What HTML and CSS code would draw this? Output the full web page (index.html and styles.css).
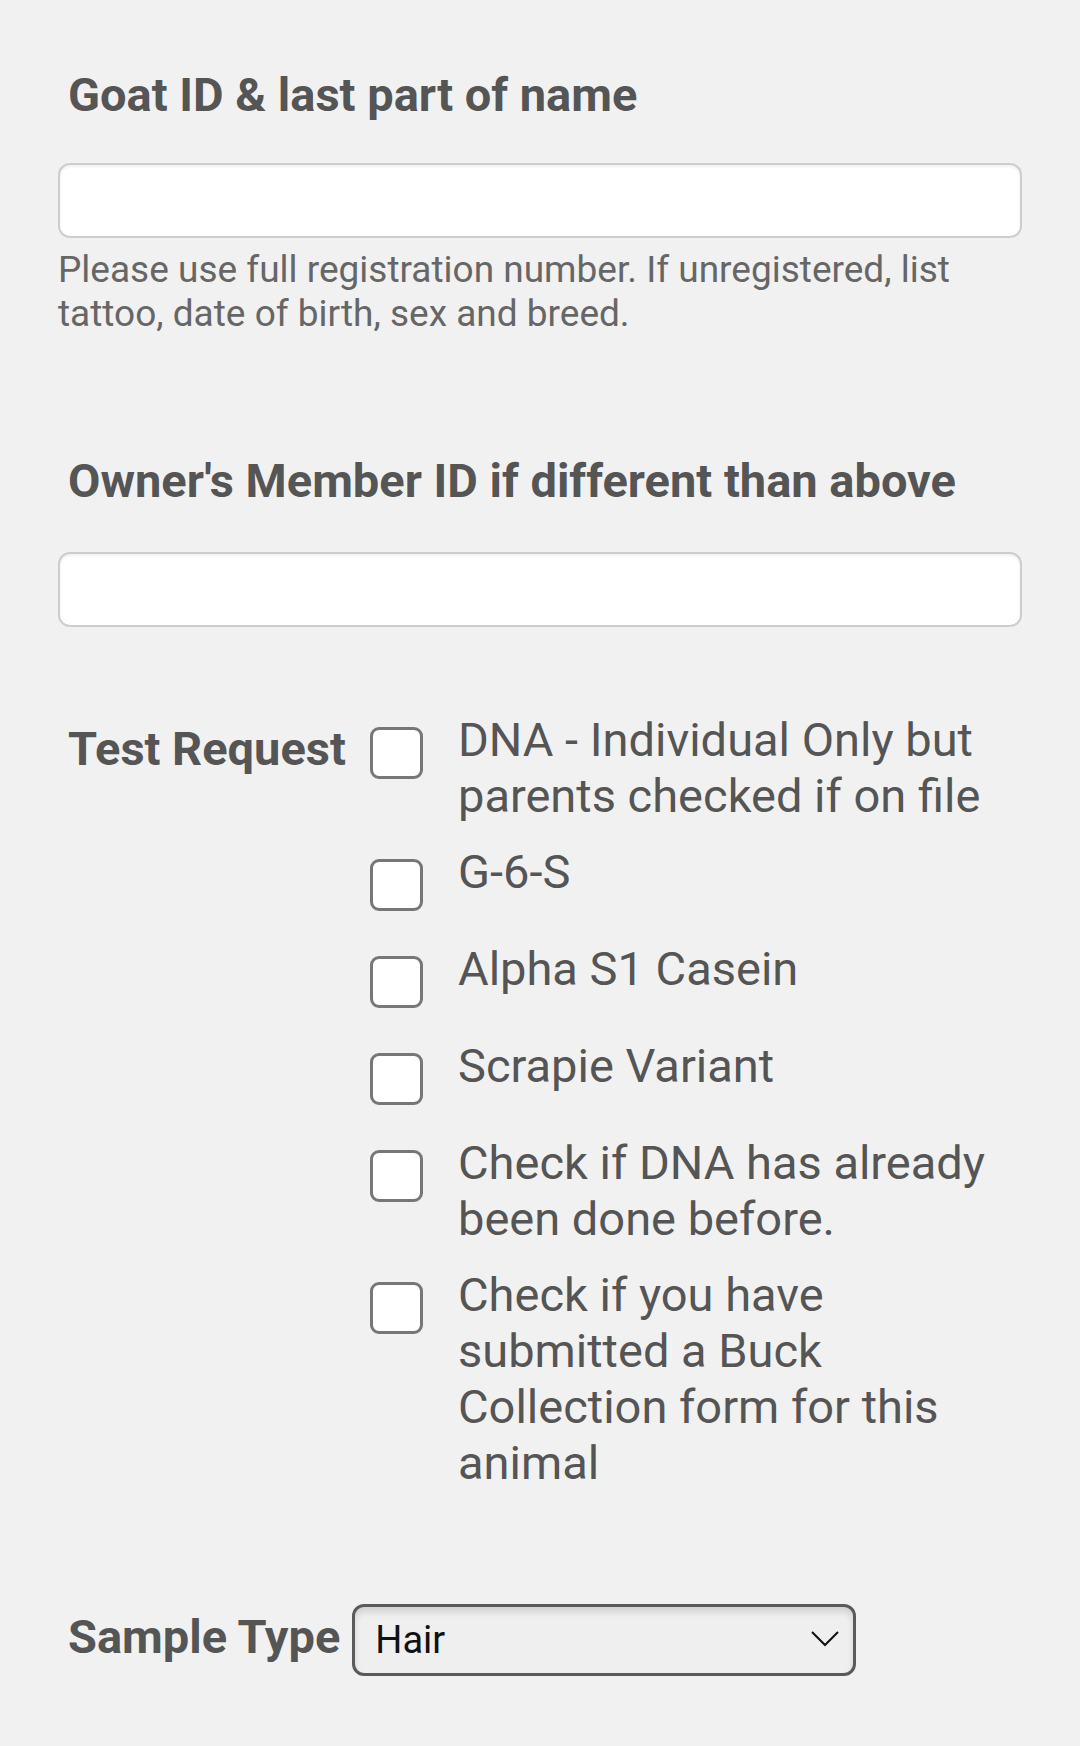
FILE: index.html
```html
<!DOCTYPE html>
<html lang="en">
<head>
  <meta charset="UTF-8">
  <title>DNA Test Request</title>
  <link rel="stylesheet" href="styles.css">
</head>
<body>
  <form class="test-form">
    <div class="field">
      <label class="field-label" for="goat-id">Goat ID &amp; last part of name</label>
      <input class="text-input" type="text" id="goat-id">
      <div class="help">Please use full registration number. If unregistered, list tattoo, date of birth, sex and breed.</div>
    </div>

    <div class="field field-owner">
      <label class="field-label" for="owner-id">Owner's Member ID if different than above</label>
      <input class="text-input" type="text" id="owner-id">
    </div>

    <div class="test-row">
      <div class="row-label">Test Request</div>
      <ul class="options">
        <li class="option"><input type="checkbox" class="box"><span class="option-text">DNA - Individual Only but parents checked if on file</span></li>
        <li class="option"><input type="checkbox" class="box"><span class="option-text">G-6-S</span></li>
        <li class="option"><input type="checkbox" class="box"><span class="option-text">Alpha S1 Casein</span></li>
        <li class="option"><input type="checkbox" class="box"><span class="option-text">Scrapie Variant</span></li>
        <li class="option"><input type="checkbox" class="box"><span class="option-text">Check if DNA has already been done before.</span></li>
        <li class="option"><input type="checkbox" class="box"><span class="option-text">Check if you have submitted a Buck Collection form for this animal</span></li>
      </ul>
    </div>

    <div class="sample-row">
      <label class="row-label">Sample Type</label>
      <div class="select">
        <span>Hair</span>
        <svg class="chevron" width="28" height="16" viewBox="0 0 28 16"><path d="M1 1 L14 14 L27 1" fill="none" stroke="#111" stroke-width="2"/></svg>
      </div>
    </div>
  </form>
</body>
</html>
```

FILE: styles.css
```css
body {
  margin: 0;
  background: #f1f1f1;
  font-family: Roboto, "Noto Sans", Arial, sans-serif;
  color: #555;
}
.test-form {
  padding: 66px 58px 60px 58px;
}
.field-label {
  display: block;
  padding-left: 10px;
  font-size: 47px;
  font-weight: 700;
  line-height: 58px;
  color: #555;
}
.text-input {
  display: block;
  box-sizing: border-box;
  width: 964px;
  height: 75px;
  margin-top: 39px;
  border: 2px solid #cdcdcd;
  border-radius: 12px;
  background: #fff;
  box-shadow: inset 0 2px 3px rgba(0,0,0,0.06);
}
.field-owner .text-input {
  margin-top: 42px;
}
.help {
  margin-top: 10px;
  font-size: 37px;
  line-height: 44px;
  color: #666;
}
.field-owner {
  margin-top: 116px;
}
.test-row {
  display: flex;
  margin-top: 85px;
}
.row-label {
  padding-left: 10px;
  font-size: 47px;
  font-weight: 700;
  line-height: 58px;
  color: #555;
}
.test-row .row-label {
  width: 302px;
  margin-top: 8px;
}
.options {
  list-style: none;
  margin: 0;
  padding: 0;
  flex: 1;
}
.option {
  display: flex;
  align-items: flex-start;
  margin-bottom: 20px;
}
.box {
  appearance: none;
  -webkit-appearance: none;
  flex: none;
  width: 53px;
  height: 52px;
  margin: 15px 35px 10px 0;
  border: 3px solid #777;
  border-radius: 9px;
  background: #fff;
}
.option-text {
  font-size: 47px;
  line-height: 56px;
  color: #555;
  padding-right: 10px;
}
.sample-row {
  display: flex;
  align-items: center;
  margin-top: 93px;
}
.sample-row .row-label {
  margin-right: 12px;
  margin-top: -6px;
}
.select {
  box-sizing: border-box;
  width: 504px;
  height: 72px;
  display: flex;
  align-items: center;
  justify-content: space-between;
  padding: 0 14px 0 20px;
  border: 3px solid #5a5a5a;
  border-radius: 12px;
  background: #efefef;
  box-shadow: inset 0 5px 6px rgba(0,0,0,0.12);
  font-size: 38px;
  color: #111;
}
.chevron {
  margin-top: -2px;
}
```
